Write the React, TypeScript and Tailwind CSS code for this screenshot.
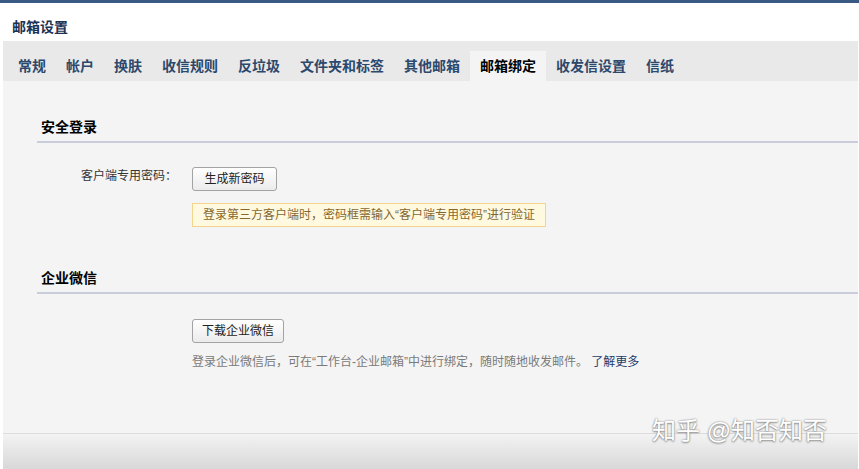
import React from 'react';

const tabs = ['常规', '帐户', '换肤', '收信规则', '反垃圾', '文件夹和标签', '其他邮箱', '邮箱绑定', '收发信设置', '信纸'];

const SectionTitle: React.FC<{ title: string }> = ({ title }) => (
    <div className="border-b-2 border-[#c9cdd9] pb-[4px]">
        <h2 className="pl-[4px] text-[14px] font-bold leading-[20px] text-black">{title}</h2>
    </div>
);

const Button: React.FC<{ label: string; width: string }> = ({ label, width }) => (
    <button className={`${width} h-[24px] rounded-[3px] border border-[#a3a3a3] bg-gradient-to-b from-white to-[#ebebeb] text-center text-[12px] leading-[22px] text-[#222]`}>
        {label}
    </button>
);

const App: React.FC = () => {
    const active = '邮箱绑定';

    return (
        <div className="relative flex h-[469px] w-[859px] flex-col overflow-hidden bg-white font-['Liberation_Sans','Noto_Sans_CJK_SC',sans-serif]">
            <div className="h-[3px] bg-[#3a5a84]"></div>

            <div className="flex h-[38px] items-center pl-[12px] pt-[10px]">
                <h1 className="text-[14px] font-bold text-[#1b3254]">邮箱设置</h1>
            </div>

            <div className="ml-[3px] mr-[1px] flex h-[40px] items-end bg-[#e9e9e9] pl-[5px]">
                {tabs.map((tab) => (
                    <div
                        key={tab}
                        className={
                            tab === active
                                ? 'h-[30px] bg-[#f4f4f4] px-[10px] text-[14px] font-bold leading-[30px] text-black'
                                : 'h-[30px] px-[10px] text-[14px] font-bold leading-[30px] text-[#2c486c]'
                        }
                    >
                        {tab}
                    </div>
                ))}
            </div>

            <div className="ml-[3px] mr-[1px] flex-1 border-b border-[#dcdcdc] bg-[#f4f4f4] pl-[34px] pt-[36px]">
                {/* 安全登录 */}
                <SectionTitle title="安全登录" />
                <div className="mt-[23px] flex items-center">
                    <div className="mb-[6px] w-[140px] text-right text-[12px] text-[#333]">客户端专用密码：</div>
                    <div className="ml-[15px]">
                        <Button label="生成新密码" width="w-[85px]" />
                    </div>
                </div>
                <div className="ml-[155px] mt-[12px] inline-block h-[24px] border border-[#f1d58d] bg-[#fffadf] px-[10px] text-[12px] leading-[22px] text-[#86672f]">
                    登录第三方客户端时，密码框需输入“客户端专用密码”进行验证
                </div>

                {/* 企业微信 */}
                <div className="mt-[41px]">
                    <SectionTitle title="企业微信" />
                </div>
                <div className="ml-[155px] mt-[24px]">
                    <Button label="下载企业微信" width="w-[92px]" />
                </div>
                <p className="ml-[155px] mt-[10px] text-[12px] leading-[18px] text-[#7a7a7a]">
                    登录企业微信后，可在“工作台-企业邮箱”中进行绑定，随时随地收发邮件。{' '}
                    <a className="text-[#1d3b6c]">了解更多</a>
                </p>
            </div>

            <div className="ml-[3px] mr-[1px] h-[35px] bg-gradient-to-b from-[#f3f3f3] to-[#d8d8d8]"></div>

            {/* watermark */}
            <div className="absolute left-[652px] top-[416px] text-[24px] leading-[30px] text-white [text-shadow:0_0_2px_#777,0_1px_2px_#999]">
                知乎 @知否知否
            </div>
        </div>
    );
};

export default App;
